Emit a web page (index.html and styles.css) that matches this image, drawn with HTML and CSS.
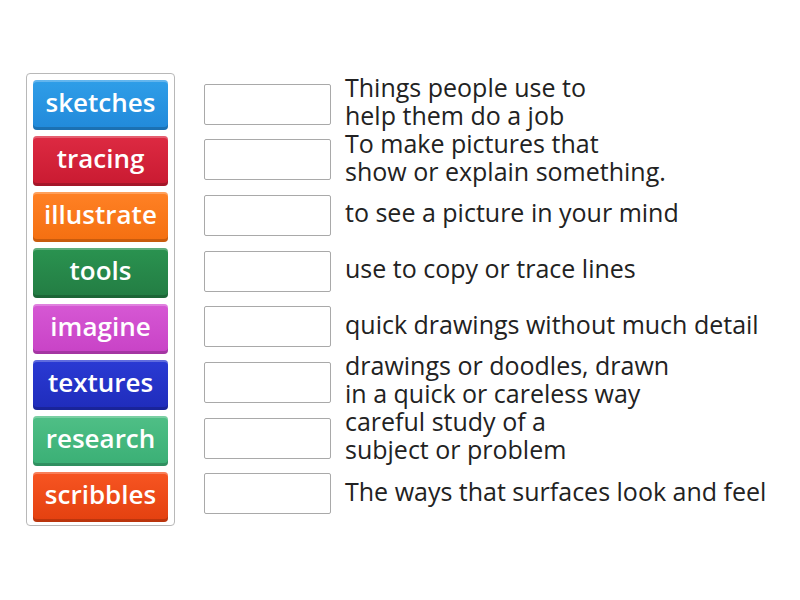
FILE: index.html
```html
<!DOCTYPE html>
<html>
<head>
<meta charset="utf-8">
<link rel="stylesheet" href="styles.css">
</head>
<body>
<div class="game">
  <div class="bank">
    <div class="tile blue">sketches</div>
    <div class="tile red">tracing</div>
    <div class="tile orange">illustrate</div>
    <div class="tile green">tools</div>
    <div class="tile purple">imagine</div>
    <div class="tile navy">textures</div>
    <div class="tile teal">research</div>
    <div class="tile vermilion">scribbles</div>
  </div>
  <div class="rows">
    <div class="row"><div class="slot"></div><div class="def">Things people use to<br>help them do a job</div></div>
    <div class="row"><div class="slot"></div><div class="def">To make pictures that<br>show or explain something.</div></div>
    <div class="row"><div class="slot"></div><div class="def">to see a picture in your mind</div></div>
    <div class="row"><div class="slot"></div><div class="def">use to copy or trace lines</div></div>
    <div class="row"><div class="slot"></div><div class="def">quick drawings without much detail</div></div>
    <div class="row"><div class="slot"></div><div class="def">drawings or doodles, drawn<br>in a quick or careless way</div></div>
    <div class="row"><div class="slot"></div><div class="def">careful study of a<br>subject or problem</div></div>
    <div class="row"><div class="slot"></div><div class="def">The ways that surfaces look and feel</div></div>
  </div>
</div>
</body>
</html>
```
FILE: styles.css
```css
html, body {
  margin: 0;
  padding: 0;
  background: #fff;
  width: 800px;
  height: 600px;
  overflow: hidden;
  font-family: "Open Sans", "Liberation Sans", sans-serif;
}
.game {
  display: flex;
  align-items: flex-start;
  padding: 73px 0 0 26px;
}
.bank {
  display: flex;
  flex-direction: column;
  gap: 6px;
  padding: 6px 6px 3px 6px;
  border: 1px solid #b8b8b8;
  border-radius: 4px;
}
.tile {
  width: 135px;
  height: 50px;
  box-sizing: border-box;
  border-radius: 4px;
  color: #fff;
  font-weight: 600;
  font-size: 26px;
  display: flex;
  align-items: center;
  justify-content: center;
  padding-bottom: 6px;
  box-shadow: inset 0 -3px 0 rgba(0,0,0,0.18), inset 0 2px 0 rgba(255,255,255,0.25);
}
.blue { background: linear-gradient(#2f9ee8, #2189da); }
.red { background: linear-gradient(#dd2a42, #c91a31); }
.orange { background: linear-gradient(#ff8125, #f46f10); }
.green { background: linear-gradient(#2a9350, #237c43); }
.purple { background: linear-gradient(#d658d4, #c842c6); }
.navy { background: linear-gradient(#2a3ad4, #1f2cbb); }
.teal { background: linear-gradient(#4fbf86, #3aaf75); }
.vermilion { background: linear-gradient(#f75522, #e3400f); }
.rows {
  display: flex;
  flex-direction: column;
  gap: 5.7px;
  margin-left: 29px;
  padding-top: 6px;
}
.row {
  height: 50px;
  display: flex;
  align-items: center;
}
.slot {
  width: 127px;
  height: 41px;
  box-sizing: border-box;
  border: 1px solid #a9a9a9;
  border-radius: 2px;
  background: #fff;
  flex: none;
}
.def {
  margin-left: 14px;
  margin-top: -6px;
  font-size: 25px;
  line-height: 28px;
  color: #222;
  white-space: nowrap;
}
```
